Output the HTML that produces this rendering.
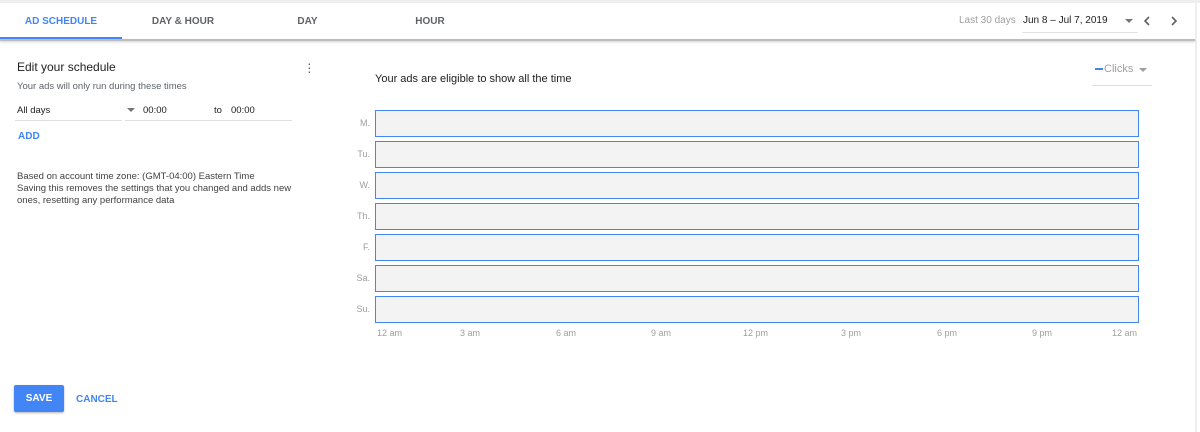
<!DOCTYPE html>
<html><head><style>
*{margin:0;padding:0;box-sizing:border-box}
body{width:1200px;height:432px;background:#fff;font-family:"Liberation Sans",sans-serif;position:relative;overflow:hidden;color:#212121}
.a{position:absolute;white-space:nowrap}
.tab{font-size:10px;font-weight:600;color:#5f6368;top:16px;text-align:center}
.row{position:absolute;left:375px;width:764px;height:27px;border:1.5px solid #4285f4;background:#f3f3f3}
.dl{position:absolute;width:20px;text-align:right;left:350px;font-size:9px;color:#9e9e9e}
.tl{position:absolute;top:328px;font-size:9px;color:#9e9e9e}
.arr{position:absolute;width:0;height:0;border-left:4px solid transparent;border-right:4px solid transparent;border-top:4px solid #757575}
</style></head><body>
<div class="a" style="left:0;top:0;width:1200px;height:3px;background:#eee"></div>
<div class="a" style="left:1195px;top:0;width:2px;height:432px;background:#eee"></div>
<div class="a" style="left:0;top:39px;width:1195px;height:2px;background:#bdbdbd;box-shadow:0 1px 2px rgba(0,0,0,.2)"></div>
<div class="a tab" style="left:0;width:122px;color:#4285f4">AD SCHEDULE</div>
<div class="a" style="left:0;top:37px;width:122px;height:2px;background:#4285f4"></div>
<div class="a tab" style="left:128px;width:110px">DAY &amp; HOUR</div>
<div class="a tab" style="left:270px;width:75px">DAY</div>
<div class="a tab" style="left:395px;width:70px">HOUR</div>
<div class="a" style="left:959px;top:15px;font-size:10px;color:#9e9e9e">Last 30 days</div>
<div class="a" style="left:1023px;top:15px;font-size:10px;color:#212121">Jun 8 – Jul 7, 2019</div>
<div class="a" style="left:1022px;top:32px;width:116px;height:1px;background:#e0e0e0"></div>
<div class="arr" style="left:1125px;top:19px"></div>
<svg class="a" style="left:1142px;top:15px" width="10" height="12"><path d="M7 2 L3 6 L7 10" stroke="#616161" stroke-width="1.6" fill="none"/></svg>
<svg class="a" style="left:1169px;top:15px" width="10" height="12"><path d="M3 2 L7 6 L3 10" stroke="#616161" stroke-width="1.6" fill="none"/></svg>

<div class="a" style="left:17px;top:60px;font-size:12px;color:#212121">Edit your schedule</div>
<div class="a" style="left:307px;top:61px;font-size:14px;color:#616161;line-height:4px">·<br>·<br>·</div>
<div class="a" style="left:17px;top:81px;font-size:9.5px;color:#5f6368">Your ads will only run during these times</div>
<div class="a" style="left:17px;top:105px;font-size:9.5px">All days</div>
<div class="arr" style="left:127px;top:108px"></div>
<div class="a" style="left:15px;top:120px;width:107px;height:1px;background:#e0e0e0"></div>
<div class="a" style="left:143px;top:105px;font-size:9.5px">00:00</div>
<div class="a" style="left:125px;top:120px;width:80px;height:1px;background:#e0e0e0"></div>
<div class="a" style="left:214px;top:105px;font-size:9.5px">to</div>
<div class="a" style="left:231px;top:105px;font-size:9.5px">00:00</div>
<div class="a" style="left:202px;top:120px;width:90px;height:1px;background:#e0e0e0"></div>
<div class="a" style="left:18px;top:131px;font-size:10px;font-weight:bold;color:#4285f4">ADD</div>
<div class="a" style="left:17px;top:171px;font-size:9.5px;color:#424242;line-height:12px">Based on account time zone: (GMT-04:00) Eastern Time<br>Saving this removes the settings that you changed and adds new<br>ones, resetting any performance data</div>

<div class="a" style="left:375px;top:73px;font-size:11px;color:#212121">Your ads are eligible to show all the time</div>
<div class="a" style="left:1095px;top:68px;width:8px;height:2px;background:#4285f4"></div>
<div class="a" style="left:1104px;top:63px;font-size:11px;color:#9e9e9e">Clicks</div>
<div class="arr" style="left:1139px;top:68px;border-top-color:#9e9e9e"></div>
<div class="a" style="left:1092px;top:85px;width:60px;height:1px;background:#e0e0e0"></div>

<div class="row" style="top:110px"></div><div class="dl" style="top:118px">M.</div>
<div class="row" style="top:141px"></div><div class="dl" style="top:149px">Tu.</div>
<div class="row" style="top:172px"></div><div class="dl" style="top:180px">W.</div>
<div class="row" style="top:203px"></div><div class="dl" style="top:211px">Th.</div>
<div class="row" style="top:234px"></div><div class="dl" style="top:242px">F.</div>
<div class="row" style="top:265px"></div><div class="dl" style="top:273px">Sa.</div>
<div class="row" style="top:296px"></div><div class="dl" style="top:304px">Su.</div>
<div class="tl" style="left:377px">12 am</div>
<div class="tl" style="left:460px">3 am</div>
<div class="tl" style="left:556px">6 am</div>
<div class="tl" style="left:651px">9 am</div>
<div class="tl" style="left:743px">12 pm</div>
<div class="tl" style="left:841px">3 pm</div>
<div class="tl" style="left:937px">6 pm</div>
<div class="tl" style="left:1032px">9 pm</div>
<div class="tl" style="left:1112px">12 am</div>

<div class="a" style="left:14px;top:385px;width:50px;height:27px;background:#4285f4;border-radius:2px;color:#fff;font-size:10px;font-weight:bold;text-align:center;line-height:28px;box-shadow:0 1px 2px rgba(0,0,0,.3)">SAVE</div>
<div class="a" style="left:76px;top:394px;font-size:10px;font-weight:bold;color:#4285f4">CANCEL</div>
</body></html>
